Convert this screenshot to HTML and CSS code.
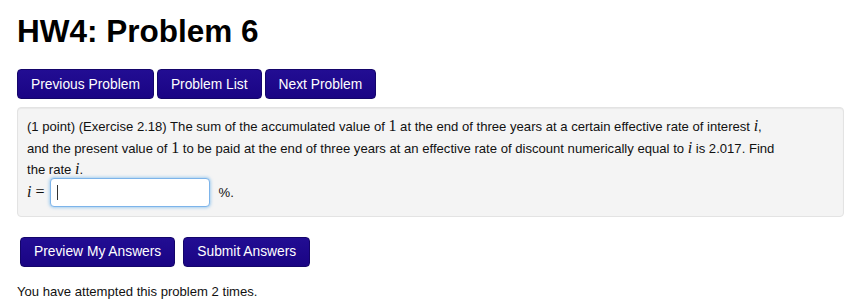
FILE: index.html
```
<!DOCTYPE html>
<html lang="en">
<head>
    <meta charset="UTF-8">
    <title>HW4: Problem 6</title>
    <link rel="stylesheet" href="styles.css">
</head>
<body>
    <h1>HW4: Problem 6</h1>

    <div class="nav-buttons">
        <a class="btn" href="#">Previous Problem</a>
        <a class="btn" href="#">Problem List</a>
        <a class="btn" href="#">Next Problem</a>
    </div>

    <div class="problem">
        <p>(1 point) (Exercise 2.18) The sum of the accumulated value of <span class="math">1</span> at the end of three years at a certain effective rate of interest <span class="math var">i</span>, and the present value of <span class="math">1</span> to be paid at the end of three years at an effective rate of discount numerically equal to <span class="math var">i</span> is 2.017. Find the rate <span class="math var">i</span>.</p>
        <div class="answer-row">
            <span class="math"><span class="var">i</span> =</span>
            <span class="answer-wrap">
                <input type="text" class="answer" aria-label="answer">
                <span class="caret"></span>
            </span>
            <span class="unit">%.</span>
        </div>
    </div>

    <div class="submit-buttons">
        <button class="btn">Preview My Answers</button>
        <button class="btn">Submit Answers</button>
    </div>

    <p class="attempts">You have attempted this problem 2 times.</p>
</body>
</html>
```

FILE: styles.css
```
body {
    margin: 0;
    padding: 0 17px;
    font-family: "Liberation Sans", Arial, sans-serif;
    font-size: 13.1px;
    line-height: 21px;
    color: #111;
    background: #fff;
}
h1 {
    margin: 0;
    padding-top: 14px;
    font-size: 31.5px;
    line-height: 34px;
    font-weight: bold;
    color: #000;
}
.nav-buttons {
    display: flex;
    gap: 3px;
    margin-top: 21px;
}
.btn {
    display: inline-flex;
    align-items: center;
    justify-content: center;
    height: 30px;
    box-sizing: border-box;
    padding: 0 13px;
    font-family: "Liberation Sans", Arial, sans-serif;
    font-size: 13.8px;
    color: #fff;
    text-decoration: none;
    background: linear-gradient(#220d93, #1a0484);
    border: 1px solid #14056a;
    border-radius: 4px;
    cursor: pointer;
}
.problem {
    margin-top: 8px;
    padding: 8px 9px 9px 9px;
    background-color: #f4f4f4;
    border: 1px solid #e3e3e3;
    border-radius: 4px;
    box-shadow: inset 0 1px 1px rgba(0, 0, 0, 0.05);
}
.problem p {
    margin: 0;
    max-width: 755px;
    line-height: 21.5px;
}
.math {
    font-family: "Liberation Serif", "DejaVu Serif", serif;
    font-size: 16px;
    line-height: 1;
}
.var {
    font-style: italic;
}
.answer-row {
    display: flex;
    align-items: center;
    gap: 6px;
    margin-top: -3px;
}
.answer-wrap {
    position: relative;
    display: block;
}
.answer {
    display: block;
    width: 160px;
    height: 29px;
    box-sizing: border-box;
    margin: 0;
    padding: 0 6px;
    border: 1px solid #7db4ea;
    border-radius: 4px;
    background: #fff;
    box-shadow: 0 0 3px 1px rgba(102, 175, 233, 0.55);
    outline: none;
    caret-color: transparent;
}
.caret {
    position: absolute;
    left: 7px;
    top: 7px;
    width: 1px;
    height: 15px;
    background: #333;
}
.unit {
    margin-left: 2px;
}
.submit-buttons {
    display: flex;
    gap: 8px;
    margin: 20px 0 0 3px;
}
.attempts {
    margin: 14px 0 0 0;
}
```
